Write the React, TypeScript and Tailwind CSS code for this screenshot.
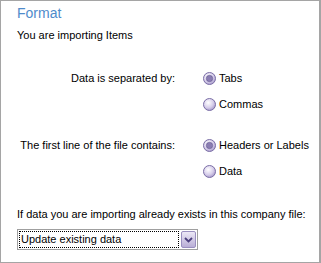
import React from "react";

function Radio({ checked }: { checked?: boolean }) {
  const id = checked ? "rg1" : "rg0";
  return (
    <svg width="13" height="13" viewBox="0 0 13 13" className="shrink-0">
      <defs>
        <radialGradient id={id} cx="0.4" cy="0.35" r="0.7">
          <stop offset="0" stopColor="#ffffff" />
          <stop offset="0.6" stopColor="#d6cdea" />
          <stop offset="1" stopColor="#a194c6" />
        </radialGradient>
      </defs>
      <circle cx="6.5" cy="6.5" r="6" fill={`url(#${id})`} stroke="#7a6ea6" strokeWidth="1" />
      {checked && <circle cx="6.5" cy="6.5" r="3.2" fill="#8a7db2" stroke="#665a94" strokeWidth="0.6" />}
    </svg>
  );
}

function Option({ label, checked }: { label: string; checked?: boolean }) {
  return (
    <div className="flex h-[13px] items-center gap-[3px]">
      <Radio checked={checked} />
      <span className="leading-none">{label}</span>
    </div>
  );
}

function Row({ label, options }: { label: string; options: { label: string; checked?: boolean }[] }) {
  return (
    <div className="flex">
      <div className="w-[158px] text-right leading-[13px]">{label}</div>
      <div className="ml-[28px] flex flex-col gap-[13px]">
        {options.map((o) => (
          <Option key={o.label} label={o.label} checked={o.checked} />
        ))}
      </div>
    </div>
  );
}

export default function App() {
  return (
    <div
      className="h-[263px] w-[321px] overflow-hidden border border-r-2 border-[#a5a5a5] bg-white text-[11px] text-black"
      style={{ fontFamily: '"Liberation Sans", Arial, sans-serif' }}
    >
      <div className="flex flex-col pl-[16px]">
        <div className="mt-[4px] text-[14px] leading-[16px] text-[#4f8bcb]">Format</div>
        <div className="mt-[8px] leading-[13px]">You are importing Items</div>

        <div className="mt-[30px]">
          <Row label="Data is separated by:" options={[{ label: "Tabs", checked: true }, { label: "Commas" }]} />
        </div>
        <div className="mt-[28px]">
          <Row
            label="The first line of the file contains:"
            options={[{ label: "Headers or Labels", checked: true }, { label: "Data" }]}
          />
        </div>

        <div className="mt-[30px] leading-[13px]">If data you are importing already exists in this company file:</div>

        <div className="mt-[8px] flex h-[21px] w-[181px] items-center border border-[#9f9f9f] p-px">
          <div className="flex h-[17px] flex-1 items-center border border-dotted border-black pl-[1px] leading-none">
            Update existing data
          </div>
          <div className="ml-[2px] flex h-[17px] w-[15px] items-center justify-center rounded-[2px] border border-[#9a8fc0] bg-gradient-to-b from-[#ece8f6] to-[#b9aed6]">
            <svg width="9" height="6" viewBox="0 0 9 6">
              <path d="M1 1 L4.5 4.5 L8 1" fill="none" stroke="#4b3f7e" strokeWidth="1.8" />
            </svg>
          </div>
        </div>
      </div>
    </div>
  );
}
